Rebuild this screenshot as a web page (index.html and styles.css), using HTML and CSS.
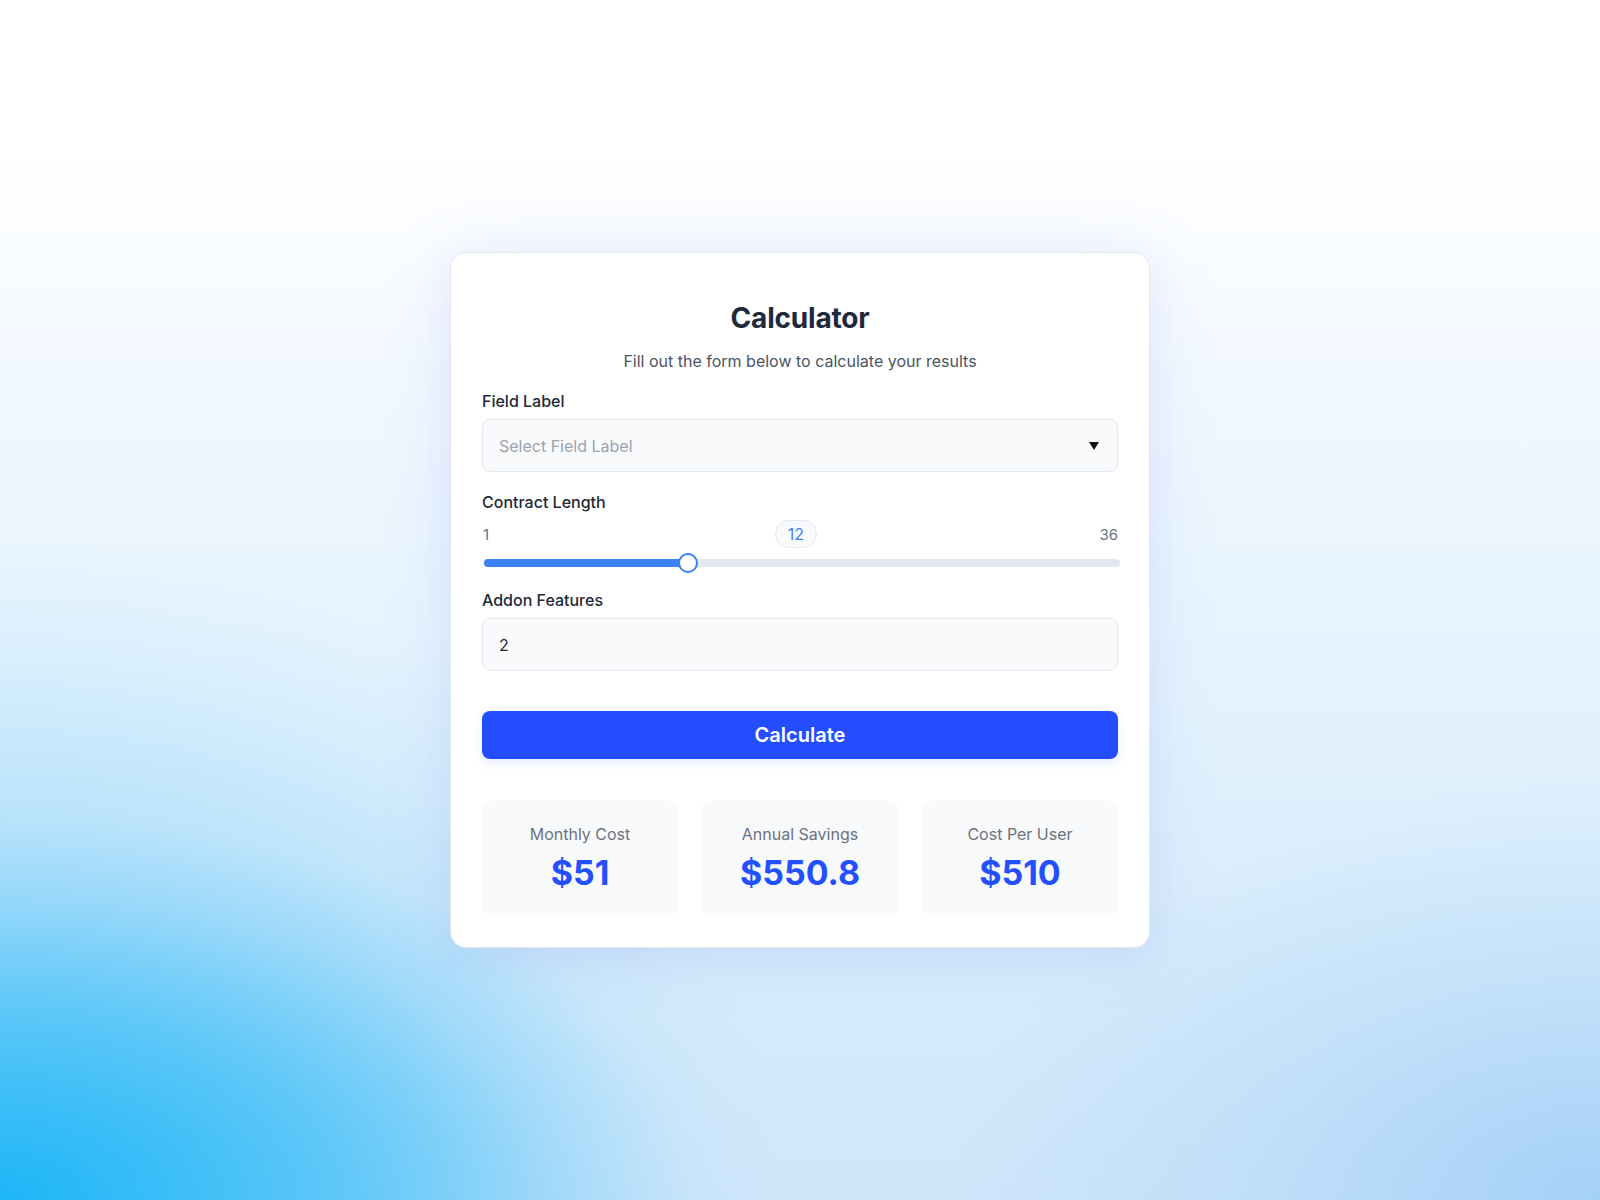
FILE: index.html
```html
<!DOCTYPE html>
<html lang="en">
<head>
<meta charset="utf-8">
<title>Calculator</title>
<link rel="stylesheet" href="styles.css">
</head>
<body>
<main class="page">
  <section class="card">
    <h1 class="title">Calculator</h1>
    <p class="subtitle">Fill out the form below to calculate your results</p>

    <div class="field">
      <label class="label">Field Label</label>
      <div class="select">
        <span class="placeholder">Select Field Label</span>
        <svg class="caret" width="10" height="8" viewBox="0 0 10 8"><path d="M0 0 H10 L5 8 Z" fill="#111"/></svg>
      </div>
    </div>

    <div class="field">
      <label class="label">Contract Length</label>
      <div class="range-labels">
        <span class="range-end">1</span>
        <span class="range-value">12</span>
        <span class="range-end">36</span>
      </div>
      <div class="slider">
        <div class="track"></div>
        <div class="fill" style="width: calc(10px + 31.43% - 6.29px)"></div>
        <div class="thumb" style="left: calc(31.43% - 6.29px)"></div>
      </div>
    </div>

    <div class="field field-after-slider">
      <label class="label">Addon Features</label>
      <div class="input">2</div>
    </div>

    <button class="btn">Calculate</button>

    <div class="results">
      <div class="result">
        <div class="result-label">Monthly Cost</div>
        <div class="result-value">$51</div>
      </div>
      <div class="result">
        <div class="result-label">Annual Savings</div>
        <div class="result-value">$550.8</div>
      </div>
      <div class="result">
        <div class="result-label">Cost Per User</div>
        <div class="result-value">$510</div>
      </div>
    </div>
  </section>
</main>
</body>
</html>
```

FILE: styles.css
```css
* { box-sizing: border-box; }

html, body {
  margin: 0;
  padding: 0;
}

body {
  font-family: Inter, "Noto Sans", "Liberation Sans", sans-serif;
  color: #1f2937;
  min-height: 100vh;
  background-color: #ffffff;
  background-image:
    radial-gradient(ellipse 700px 380px at 0% 100%, rgba(16, 179, 247, 0.88) 0%, rgba(30, 183, 247, 0.5) 50%, rgba(60, 190, 248, 0.18) 80%, rgba(60, 190, 248, 0) 100%),
    radial-gradient(ellipse 780px 660px at 0% 100%, rgba(70, 188, 248, 0.55) 0%, rgba(90, 195, 249, 0.28) 58%, rgba(110, 200, 250, 0.1) 82%, rgba(120, 205, 250, 0) 100%),
    radial-gradient(ellipse 650px 420px at 100% 100%, rgba(160, 206, 247, 0.9) 0%, rgba(170, 212, 248, 0.4) 55%, rgba(180, 216, 248, 0) 100%),
    linear-gradient(180deg, #ffffff 0%, #ffffff 13%, #f1f8ff 32%, #e2f2fd 60%, #d6ebfb 82%, #cfe6fa 100%);
}

.page {
  min-height: 100vh;
  display: flex;
  align-items: center;
  justify-content: center;
}

.card {
  width: 700px;
  background: #ffffff;
  border: 1px solid #e6e9ef;
  border-radius: 16px;
  padding: 47px 31px 31px;
  box-shadow: 0 0 70px rgba(110, 120, 240, 0.13), 0 10px 30px rgba(100, 120, 200, 0.06);
}

.title {
  margin: 0;
  font-size: 28px;
  line-height: 36px;
  font-weight: 700;
  text-align: center;
  color: #1e293b;
  letter-spacing: -0.2px;
}

.subtitle {
  margin: 13px 0 16px;
  font-size: 16px;
  line-height: 24px;
  text-align: center;
  color: #4b5563;
}

.field {
  display: flex;
  flex-direction: column;
}

.field + .field { margin-top: 18px; }

.field + .field-after-slider { margin-top: 15px; }

.label {
  font-size: 16px;
  line-height: 24px;
  font-weight: 500;
  color: #1f2937;
  margin-bottom: 6px;
}

.select, .input {
  height: 53px;
  border: 1px solid #e2e8f0;
  border-radius: 8px;
  background: #f8fafc;
  padding: 0 16px;
  display: flex;
  align-items: center;
  font-size: 16px;
}

.select { justify-content: space-between; padding-right: 18px; }

.placeholder { color: #9ca3af; }

.caret { display: block; }

.input { color: #1f2937; }

.range-labels {
  display: flex;
  justify-content: space-between;
  align-items: center;
  height: 28px;
}

.range-end {
  font-size: 15px;
  color: #6b7280;
  padding-left: 1px;
}

.range-value {
  font-size: 16px;
  line-height: 20px;
  color: #3b82f6;
  background: #f8fafc;
  border: 1px solid #e2e8f0;
  border-radius: 999px;
  padding: 3px 12px;
  margin-left: 4px;
}

.slider {
  position: relative;
  height: 20px;
  margin: 5px -2px 0 0;
}

.track {
  position: absolute;
  left: 2px;
  right: 0;
  top: 6px;
  height: 8px;
  border-radius: 4px;
  background: #e2e8f0;
}

.fill {
  position: absolute;
  left: 2px;
  top: 6px;
  height: 8px;
  border-radius: 4px;
  background: #3b82f6;
}

.thumb {
  position: absolute;
  top: 0;
  margin-left: 2px;
  width: 20px;
  height: 20px;
  border-radius: 50%;
  background: #ffffff;
  border: 2px solid #3b82f6;
}

.btn {
  display: block;
  width: 100%;
  margin-top: 40px;
  height: 48px;
  border: none;
  border-radius: 8px;
  background: #234dff;
  color: #ffffff;
  font-family: inherit;
  font-size: 20px;
  font-weight: 600;
  box-shadow: 0 4px 10px rgba(35, 77, 255, 0.12);
}

.results {
  margin-top: 41px;
  display: grid;
  grid-template-columns: repeat(3, 1fr);
  gap: 24px;
}

.result {
  background: #f8fafc;
  border-radius: 10px;
  padding: 22px 12px 22px;
  text-align: center;
}

.result-label {
  font-size: 16px;
  line-height: 24px;
  color: #6b7280;
  margin-bottom: 6px;
}

.result-value {
  font-size: 34px;
  line-height: 42px;
  font-weight: 700;
  color: #2350ff;
}
```
